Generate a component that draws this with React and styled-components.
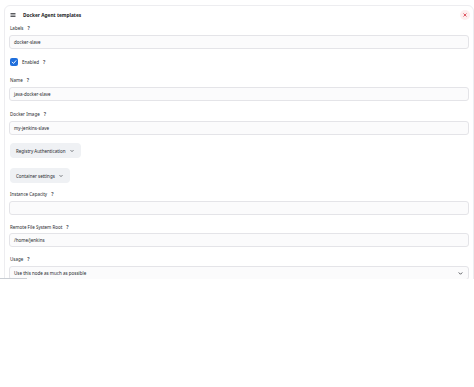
import React from "react";
import styled, { createGlobalStyle } from "styled-components";

const GlobalStyle = createGlobalStyle`
    html, body {
        margin: 0;
        padding: 0;
        background: #ffffff;
    }
    body {
        font-family: "Noto Sans", "Open Sans", sans-serif;
        color: #1f2023;
    }
`;

const Viewport = styled.div`
    position: relative;
    width: 474px;
    height: 279px;
    overflow: hidden;
`;

const Card = styled.div`
    margin: 5px 0 0 4px;
    border: 1px solid #ededf0;
    border-radius: 6px;
    padding: 0 4px 20px 4px;
    display: flex;
    flex-direction: column;
    gap: 10px;
`;

const Header = styled.div`
    display: flex;
    align-items: center;
    height: 18px;
    margin-bottom: -9px;
    gap: 7px;
`;

const Title = styled.div`
    flex: 1;
    font-size: 4.8px;
    font-weight: 700;
    color: #1b1c1f;
`;

const Burger = styled.svg`
    width: 6px;
    height: 6px;
    margin-left: 1px;
`;

const CloseButton = styled.div`
    width: 10px;
    height: 10px;
    border-radius: 50%;
    background: #fdeeee;
    display: flex;
    align-items: center;
    justify-content: center;
    margin-right: -1px;
`;

const Field = styled.div`
    display: flex;
    flex-direction: column;
    gap: ${(p) => p.gap || 4}px;
    margin-top: ${(p) => p.top || 0}px;
`;

const LabelRow = styled.div`
    display: flex;
    align-items: center;
    height: 6px;
    gap: 4px;
    font-size: 4.5px;
    color: #2a2b2f;
    padding-left: 1px;
`;

const Help = styled.span`
    font-size: 4.8px;
    font-weight: 700;
    color: #55575d;
`;

const Input = styled.div`
    box-sizing: border-box;
    height: 14px;
    border: 1px solid #e4e4e8;
    border-radius: 3px;
    background: #fbfbfc;
    display: flex;
    align-items: center;
    justify-content: space-between;
    padding: 0 5px 0 4px;
    font-size: 4.5px;
    color: #26272b;
`;

const CheckRow = styled.div`
    display: flex;
    align-items: center;
    gap: 4px;
    height: 8px;
    margin-top: -1px;
    font-size: 4.5px;
    color: #2a2b2f;
    padding-left: 1px;
`;

const Checkbox = styled.div`
    width: 8px;
    height: 8px;
    border-radius: 2px;
    background: #1f6fdc;
    display: flex;
    align-items: center;
    justify-content: center;
`;

const Toggle = styled.div`
    align-self: flex-start;
    box-sizing: border-box;
    height: 15px;
    border-radius: 4px;
    background: #eff1f4;
    display: flex;
    align-items: center;
    gap: 4px;
    padding: 0 7px 0 6px;
    margin-left: 1px;
    font-size: 4.5px;
    color: #2a2b2f;
    margin-top: ${(p) => p.top || 0}px;
`;

const ScrollHint = styled.div`
    position: absolute;
    left: 0;
    bottom: 0;
    width: 27px;
    height: 1px;
    background: #c9cdd3;
`;

const Chevron = ({ size = 4 }) => (
    <svg width={size} height={size} viewBox="0 0 10 10">
        <path d="M2 3.5 L5 6.5 L8 3.5" fill="none" stroke="#33363b" strokeWidth="1.6" strokeLinecap="round" strokeLinejoin="round" />
    </svg>
);

const Label = ({ children }) => (
    <LabelRow>
        {children}
        <Help>?</Help>
    </LabelRow>
);

const TextField = ({ label, value, gap, top, chevron }) => (
    <Field gap={gap} top={top}>
        <Label>{label}</Label>
        <Input>
            <span>{value}</span>
            {chevron && <Chevron size={5} />}
        </Input>
    </Field>
);

const App = () => {
    return (
        <>
            <GlobalStyle />
            <Viewport>
                <Card>
                    <Header>
                        <Burger viewBox="0 0 10 10">
                            <path d="M1.5 2.5h7M1.5 5h7M1.5 7.5h7" stroke="#2b2d31" strokeWidth="1.3" strokeLinecap="round" />
                        </Burger>
                        <Title>Docker Agent templates</Title>
                        <CloseButton>
                            <svg width="4" height="4" viewBox="0 0 10 10">
                                <path d="M2 2L8 8M8 2L2 8" stroke="#d9434f" strokeWidth="2.2" strokeLinecap="round" />
                            </svg>
                        </CloseButton>
                    </Header>
                    <TextField label="Labels" value="docker-slave" />
                    <CheckRow>
                        <Checkbox>
                            <svg width="6" height="6" viewBox="0 0 10 10">
                                <path d="M2 5.2L4.2 7.4L8.2 2.8" fill="none" stroke="#ffffff" strokeWidth="1.6" strokeLinecap="round" strokeLinejoin="round" />
                            </svg>
                        </Checkbox>
                        Enabled
                        <Help>?</Help>
                    </CheckRow>
                    <TextField label="Name" value="java-docker-slave" top={1} />
                    <TextField label="Docker Image" value="my-jenkins-slave" />
                    <Toggle top={-2}>
                        Registry Authentication
                        <Chevron />
                    </Toggle>
                    <Toggle>
                        Container settings
                        <Chevron />
                    </Toggle>
                    <TextField label="Instance Capacity" value="" top={-2} />
                    <TextField label="Remote File System Root" value="/home/jenkins" gap={3} top={-1} />
                    <TextField label="Usage" value="Use this node as much as possible" top={-1} chevron />
                </Card>
                <ScrollHint />
            </Viewport>
        </>
    );
};

export default App;
